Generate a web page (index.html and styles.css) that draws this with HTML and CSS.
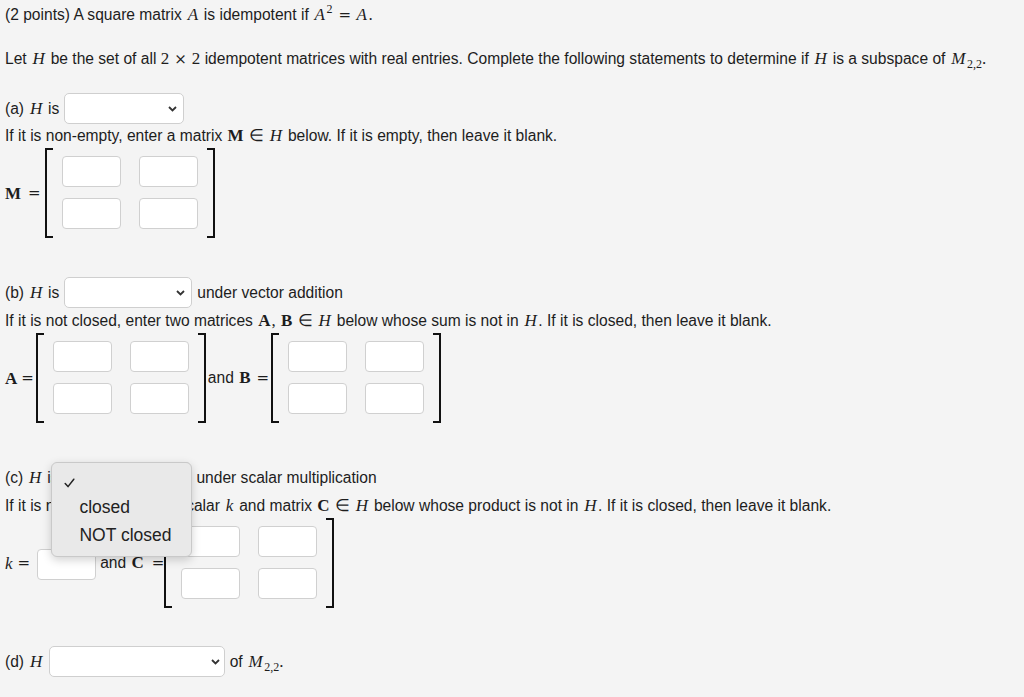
FILE: index.html
```html
<!DOCTYPE html>
<html>
<head>
<meta charset="utf-8">
<link rel="stylesheet" href="styles.css">
</head>
<body>
<div class="page">
  <p class="l1">(2 points) A square matrix <i class="m">A</i> is idempotent if <i class="m">A</i><sup class="m">2</sup><span class="eq eqa">=</span><i class="m">A</i><span class="m">.</span></p>
  <p class="l2">Let <i class="m">H</i> be the set of all <span class="m num">2<span class="times">×</span>2</span> idempotent matrices with real entries. Complete the following statements to determine if <i class="m wide">H</i> is a subspace of <i class="m mend">M</i><sub class="m">2,2</sub><span class="m">.</span></p>

  <div class="row ra"><span class="lbl">(a) <i class="m">H</i> is</span><div class="sel sa"><svg width="9" height="6" viewBox="0 0 9 6"><path d="M1 1l3.5 3.5L8 1" fill="none" stroke="#333" stroke-width="1.8"/></svg></div></div>
  <p class="tx t1">If it is non-empty, enter a matrix <b class="m">M</b> <span class="m">∈</span> <i class="m">H</i> below. If it is empty, then leave it blank.</p>
  <div class="mrow">
    <b class="m lab">M</b><span class="eq e1">=</span>
    <div class="mat"><div class="br l"></div><div class="cells"><input class="cell"><input class="cell"><input class="cell"><input class="cell"></div><div class="br r"></div></div>
  </div>

  <div class="row rb"><span class="lbl">(b) <i class="m">H</i> is</span><div class="sel sb"><svg width="9" height="6" viewBox="0 0 9 6"><path d="M1 1l3.5 3.5L8 1" fill="none" stroke="#333" stroke-width="1.8"/></svg></div><span class="after">under vector addition</span></div>
  <p class="tx">If it is not closed, enter two matrices <b class="m">A</b><span class="m">,</span> <b class="m">B</b> <span class="m">∈</span> <i class="m">H</i> below whose sum is not in <i class="m">H</i>. If it is closed, then leave it blank.</p>
  <div class="mrow">
    <b class="m lab">A</b><span class="eq e2">=</span>
    <div class="mat"><div class="br l"></div><div class="cells"><input class="cell"><input class="cell"><input class="cell"><input class="cell"></div><div class="br r"></div></div>
    <span class="and">and <b class="m">B</b></span><span class="eq e2b">=</span>
    <div class="mat"><div class="br l"></div><div class="cells"><input class="cell"><input class="cell"><input class="cell"><input class="cell"></div><div class="br r"></div></div>
  </div>

  <div class="row rc"><span class="lbl">(c) <i class="m">H</i> is</span><div class="selwrap"><div class="sel sb"><svg width="9" height="6" viewBox="0 0 9 6"><path d="M1 1l3.5 3.5L8 1" fill="none" stroke="#333" stroke-width="1.8"/></svg></div><div class="menu"><div class="opt"><svg class="chk" width="11" height="10" viewBox="0 0 11 10"><path d="M1.2 5.6l2.8 3L9.8 1.2" fill="none" stroke="#222" stroke-width="1.5" stroke-linecap="round" stroke-linejoin="round"/></svg></div><div class="opt">closed</div><div class="opt">NOT closed</div></div></div><span class="after">under scalar multiplication</span></div>
  <p class="tx">If it is not closed, enter a scalar <i class="m">k</i> and matrix <b class="m">C</b> <span class="m">∈</span> <i class="m">H</i> below whose product is not in <i class="m">H</i>. If it is closed, then leave it blank.</p>
  <div class="mrow">
    <i class="m lab">k</i><span class="eq e3">=</span><input class="cell kin">
    <span class="and a2">and <b class="m">C</b></span><span class="eq e4">=</span>
    <div class="mat"><div class="br l"></div><div class="cells"><input class="cell"><input class="cell"><input class="cell"><input class="cell"></div><div class="br r"></div></div>
  </div>

  <div class="row rd"><span class="lbl">(d) <i class="m">H</i></span><div class="sel sd"><svg width="9" height="6" viewBox="0 0 9 6"><path d="M1 1l3.5 3.5L8 1" fill="none" stroke="#333" stroke-width="1.8"/></svg></div><span class="after">of <i class="m">M</i><sub class="m">2,2</sub><span class="m">.</span></span></div>
</div>
</body>
</html>
```

FILE: styles.css
```css
html, body {
  margin: 0;
  background: #f4f4f4;
}
body {
  font-family: "Liberation Sans", Arial, Helvetica, sans-serif;
  font-size: 15.6px;
  color: #1d1d1d;
}
.page {
  padding-left: 5px;
  padding-top: 1px;
}
p {
  margin: 0;
  line-height: 20px;
  white-space: nowrap;
}
.m {
  font-family: "Liberation Serif", "Times New Roman", serif;
  font-size: 17px;
}
i.m {
  font-style: italic;
  margin: 0 1.5px;
}
b.m {
  font-weight: bold;
  margin: 0 1px;
}
.wide { margin-left: 9px; margin-right: 4px; }
.mend { margin-left: 8px; }
.num { margin: 0; }
.times {
  font-family: "DejaVu Serif", serif;
  font-size: 15px;
  margin: 0 5px;
}
sup.m {
  font-size: 12px;
  vertical-align: 7px;
  line-height: 0;
}
sub.m {
  font-size: 12px;
  vertical-align: -4px;
  line-height: 0;
}
.eq {
  font-family: "DejaVu Serif", serif;
  font-size: 15px;
  margin: 0 5px;
}
.eqa { margin: 0 4px 0 6px; }
.l1 { margin-top: 4px; }
.l2 { margin-top: 24px; }
.row {
  display: flex;
  align-items: center;
  height: 31px;
  white-space: nowrap;
}
.ra { margin-top: 24px; }
.rb { margin-top: 39px; }
.rc { margin-top: 39px; }
.rd { margin-top: 38px; }
.tx { margin-top: 3px; }
.tx.t1 { margin-top: 2px; }
.sel {
  box-sizing: border-box;
  height: 31px;
  background: #fff;
  border: 1px solid #cfcfcf;
  border-radius: 5px;
  display: flex;
  align-items: center;
  justify-content: flex-end;
  padding-right: 6px;
  margin-left: 5px;
}
.sa { width: 120px; }
.sb { width: 128px; }
.sd { width: 176px; margin-left: 5px; padding-right: 4px; }
.after { margin-left: 5px; }
.mrow {
  display: flex;
  align-items: center;
  margin-top: 2px;
  height: 90px;
}
.m.lab { margin: 2px 0 0 0; }
.e1 { margin: 0 4px 0 7px; }
.e2 { margin: 0 2px 0 4px; }
.e2b { margin: 0 2px 0 5px; }
.e3 { margin: 0 7px 0 5px; }
.e4 { margin: 0 0 0 7px; }
.mat {
  display: flex;
  height: 90px;
}
.br {
  box-sizing: border-box;
  width: 8px;
  border: 2px solid #111;
}
.br.l { border-right: none; }
.br.r { border-left: none; }
.cells {
  display: grid;
  grid-template-columns: 59px 59px;
  column-gap: 18px;
  row-gap: 11px;
  padding: 8px 9px 9px;
  align-content: center;
}
.cell {
  box-sizing: border-box;
  width: 59px;
  height: 31px;
  margin: 0;
  padding: 0;
  background: #fff;
  border: 1px solid #d0d0d0;
  border-radius: 4px;
}
.kin { margin-top: 3px; }
.and { margin-left: 2px; }
.a2 { margin-left: 4px; }
.selwrap {
  position: relative;
  display: flex;
}
.menu {
  position: absolute;
  left: -7px;
  top: 0;
  width: 141px;
  box-sizing: border-box;
  padding: 2px 0 7px;
  background: #e9e9e9;
  border: 1px solid #c9c9c9;
  border-radius: 6px;
  box-shadow: 0 3px 10px rgba(0,0,0,0.18);
  z-index: 5;
}
.opt {
  height: 28px;
  display: flex;
  align-items: center;
  padding-left: 27px;
  font-size: 17.5px;
  color: #222;
  position: relative;
}
.chk {
  position: absolute;
  left: 12px;
  top: 13px;
}
```
